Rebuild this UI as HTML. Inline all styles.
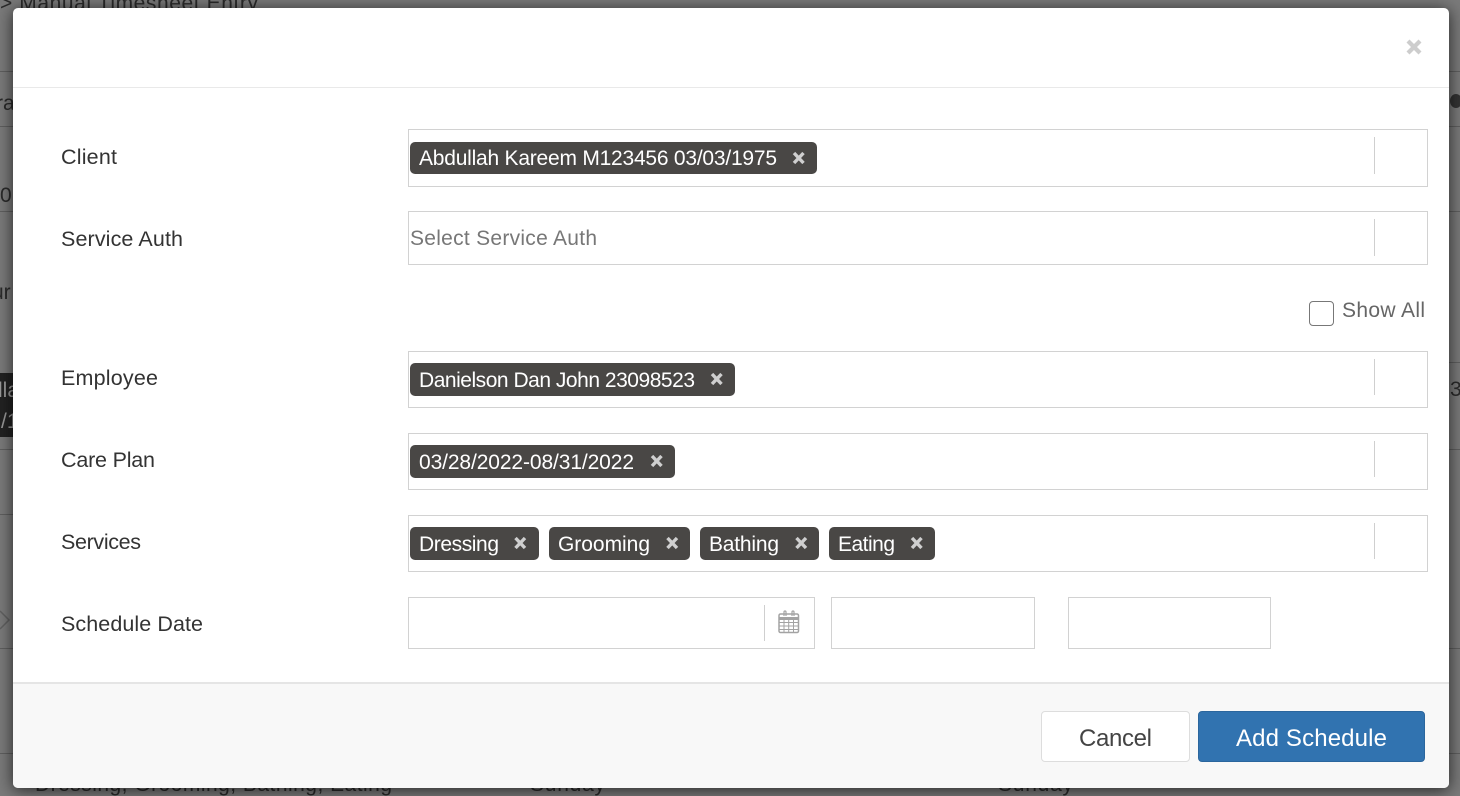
<!DOCTYPE html>
<html lang="en">
<head>
<meta charset="utf-8">
<title>Add Schedule</title>
<style>
html,body{margin:0;padding:0;width:1460px;height:796px;overflow:hidden;background:#7a7a7a;font-family:"Liberation Sans",sans-serif}
.abs,.box,.tag,.div{position:absolute;box-sizing:border-box}
.hl{position:absolute;background:#5f5f5f;height:1px}
.modal{position:absolute;left:13px;top:8px;width:1436px;height:780px;background:#fff;border-radius:5px;box-shadow:0 2px 16px rgba(0,0,0,.7);overflow:hidden}
.head{position:absolute;left:0;top:79px;width:100%;height:1px;background:#e9e9e9}
.foot{position:absolute;left:0;top:674px;width:100%;height:106px;background:#f8f8f8;border-top:2px solid #e5e5e5;box-sizing:border-box}
.box{border:1.5px solid #d2d2d2;background:#fff}
.div{width:1px;background:#cfcfcf}
.tag{background:#494745;border-radius:5px}
.cb{position:absolute;left:1309px;top:301px;width:25px;height:25px;border:1.5px solid #777;border-radius:4px;box-sizing:border-box;background:#fff}
.btn{position:absolute;top:711px;height:51px;border-radius:4px;box-sizing:border-box}
svg{position:absolute;left:0;top:0}
text{font-family:"Liberation Sans",sans-serif;font-size:21px}
.l{fill:#333;font-size:21.5px}.t{fill:#fff}.bg{fill:#2a2a2a}
</style>
</head>
<body>
<div class="hl" style="left:0;top:71px;width:13px"></div>
<div class="hl" style="left:0;top:126px;width:13px"></div>
<div class="hl" style="left:0;top:211px;width:13px"></div>
<div class="hl" style="left:0;top:449px;width:13px"></div>
<div class="hl" style="left:0;top:514px;width:13px"></div>
<div class="hl" style="left:0;top:648px;width:13px"></div>
<div class="hl" style="left:0;top:753px;width:13px"></div>
<div class="hl" style="left:1449px;top:71px;width:11px"></div>
<div class="hl" style="left:1449px;top:126px;width:11px"></div>
<div class="hl" style="left:1449px;top:211px;width:11px"></div>
<div class="hl" style="left:1449px;top:362px;width:11px"></div>
<div class="hl" style="left:1449px;top:449px;width:11px"></div>
<div class="hl" style="left:1449px;top:648px;width:11px"></div>
<div class="hl" style="left:1449px;top:753px;width:11px"></div>
<div class="abs" style="left:0;top:373px;width:13px;height:64px;background:#222"></div>

<svg width="1460" height="796" viewBox="0 0 1460 796">
  <text class="bg" x="0" y="10" textLength="258" lengthAdjust="spacing">&gt; Manual Timesheet Entry</text>
  <text class="bg" x="-4" y="110">ra</text>
  <text class="bg" x="0" y="202">0</text>
  <text class="bg" x="-8" y="299">ur</text>
  <text x="-2" y="397" style="fill:#999">lla</text>
  <text x="1" y="428" style="fill:#999">/1</text>
  <text class="bg" x="1450" y="396">3</text>
  <path d="M0 611l9 9-9 9" fill="none" stroke="#606060" stroke-width="1.5"/>
  <ellipse cx="1456" cy="101" r="6" rx="6" ry="7" fill="#333"/>
  <text class="bg" x="35" y="791" textLength="357" lengthAdjust="spacing">Dressing, Grooming, Bathing, Eating</text>
  <text class="bg" x="530" y="791" textLength="75" lengthAdjust="spacing">Sunday</text>
  <text class="bg" x="998" y="791" textLength="75" lengthAdjust="spacing">Sunday</text>
</svg>

<div class="modal">
  <div class="head"></div>
  <div class="foot"></div>
</div>

<div class="box" style="left:408px;top:129px;width:1020px;height:58px"></div>
<div class="div" style="left:1374px;top:137px;height:37px"></div>
<div class="tag" style="left:410px;top:142px;width:407px;height:32px"></div>

<div class="box" style="left:408px;top:211px;width:1020px;height:54px"></div>
<div class="div" style="left:1374px;top:219px;height:37px"></div>

<div class="cb"></div>

<div class="box" style="left:408px;top:351px;width:1020px;height:57px"></div>
<div class="div" style="left:1374px;top:359px;height:36px"></div>
<div class="tag" style="left:410px;top:363px;width:325px;height:33px"></div>

<div class="box" style="left:408px;top:433px;width:1020px;height:57px"></div>
<div class="div" style="left:1374px;top:441px;height:36px"></div>
<div class="tag" style="left:410px;top:445px;width:265px;height:33px"></div>

<div class="box" style="left:408px;top:515px;width:1020px;height:57px"></div>
<div class="div" style="left:1374px;top:523px;height:36px"></div>
<div class="tag" style="left:410px;top:527px;width:129px;height:33px"></div>
<div class="tag" style="left:549px;top:527px;width:141px;height:33px"></div>
<div class="tag" style="left:700px;top:527px;width:119px;height:33px"></div>
<div class="tag" style="left:829px;top:527px;width:106px;height:33px"></div>

<div class="box" style="left:408px;top:597px;width:407px;height:52px"></div>
<div class="div" style="left:764px;top:605px;height:36px"></div>
<div class="box" style="left:831px;top:597px;width:204px;height:52px"></div>
<div class="box" style="left:1068px;top:597px;width:203px;height:52px"></div>

<div class="btn" style="left:1041px;width:149px;background:#fff;border:1.5px solid #ddd"></div>
<div class="btn" style="left:1198px;width:227px;background:#3173b0;border:1px solid #2b669d"></div>

<svg width="1460" height="796" viewBox="0 0 1460 796">
  <text class="l" x="61" y="164" textLength="56" lengthAdjust="spacing">Client</text>
  <text class="l" x="61" y="246" textLength="122" lengthAdjust="spacing">Service Auth</text>
  <text class="l" x="61" y="385" textLength="97" lengthAdjust="spacing">Employee</text>
  <text class="l" x="61" y="467" textLength="94" lengthAdjust="spacing">Care Plan</text>
  <text class="l" x="61" y="549" textLength="80" lengthAdjust="spacing">Services</text>
  <text class="l" x="61" y="631" textLength="142" lengthAdjust="spacing">Schedule Date</text>

  <text class="t" x="419" y="165" textLength="358" lengthAdjust="spacing">Abdullah Kareem M123456 03/03/1975</text>
  <text style="fill:#777" x="410" y="245" textLength="187" lengthAdjust="spacing">Select Service Auth</text>
  <text style="fill:#666" x="1342" y="317" textLength="83" lengthAdjust="spacing">Show All</text>
  <text class="t" x="419" y="387" textLength="276" lengthAdjust="spacing">Danielson Dan John 23098523</text>
  <text class="t" x="419" y="469" textLength="215" lengthAdjust="spacing">03/28/2022-08/31/2022</text>
  <text class="t" x="419" y="551" textLength="80" lengthAdjust="spacing">Dressing</text>
  <text class="t" x="558" y="551" textLength="92" lengthAdjust="spacing">Grooming</text>
  <text class="t" x="709" y="551" textLength="70" lengthAdjust="spacing">Bathing</text>
  <text class="t" x="838" y="551" textLength="57" lengthAdjust="spacing">Eating</text>

  <g fill="none" stroke="#cfcfcf" stroke-width="3.4" stroke-linecap="butt">
    <path d="M794 153l9.500 10M803.500 153l-9.500 10"/>
    <path d="M712 374l9.500 10M721.500 374l-9.500 10"/>
    <path d="M652 456l9.500 10M661.500 456l-9.500 10"/>
    <path d="M515.500 538l9.500 10M525 538l-9.500 10"/>
    <path d="M667.500 538l9.500 10M677 538l-9.500 10"/>
    <path d="M796.500 538l9.500 10M806 538l-9.500 10"/>
    <path d="M912 538l9.500 10M921.500 538l-9.500 10"/>
  </g>
  <path d="M1408 41l12 12M1420 41l-12 12" fill="none" stroke="#cdcdcd" stroke-width="4.200"/>

  <g fill="none" stroke="#a3a3a3">
    <rect x="779" y="614" width="19.500" height="18.500" rx="1.500" stroke-width="1.500"/>
    <path d="M779 618.500h19.500" stroke-width="3"/>
    <path d="M779 622.500h19.500M779 626h19.500M779 629.500h19.500M784 620v12M788.700 620v12M793.500 620v12" stroke-width="1"/>
    <path d="M784 616v-4a1 1 0 0 1 2 0v4M792 616v-4a1 1 0 0 1 2 0v4" stroke-width="1.200"/>
  </g>

  <text style="fill:#444;font-size:24px" x="1079" y="746" textLength="73" lengthAdjust="spacing">Cancel</text>
  <text style="fill:#fff;font-size:24px" x="1236" y="746" textLength="151" lengthAdjust="spacing">Add Schedule</text>
</svg>
</body>
</html>
